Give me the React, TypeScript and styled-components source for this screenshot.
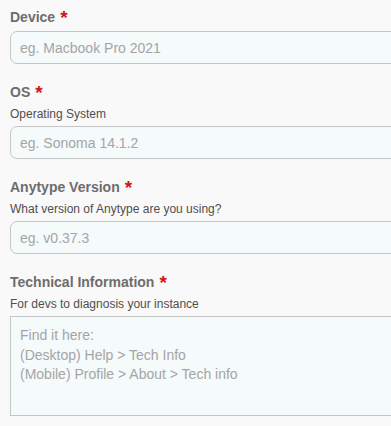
import React from "react";
import styled, { createGlobalStyle } from "styled-components";

const Global = createGlobalStyle`
  html, body {
    margin: 0;
    padding: 0;
    background: #f9f9f9;
    overflow: hidden;
  }
  body {
    font-family: "Liberation Sans", Arial, sans-serif;
  }
`;

const Form = styled.form`
  width: 460px;
  padding: 7px 0 0 10px;
  display: flex;
  flex-direction: column;
  gap: 18px;
`;

const Field = styled.div`
  display: flex;
  flex-direction: column;
  gap: 4px;
`;

const Label = styled.label`
  font-size: 14px;
  line-height: 20px;
  font-weight: bold;
  color: #6d6d6d;
`;

const Required = styled.span`
  color: #cf1717;
  font-size: 19px;
  line-height: 0;
  margin-left: 5px;
  position: relative;
  top: 2px;
`;

const Description = styled.div`
  font-size: 12px;
  line-height: 16px;
  color: #4f4f4f;
`;

const Input = styled.input`
  box-sizing: border-box;
  width: 100%;
  height: 33px;
  padding: 0 9px;
  border: 1px solid #c6c6c6;
  border-radius: 7px;
  background: #f5fafb;
  font-family: "Liberation Sans", Arial, sans-serif;
  font-size: 14px;
  outline: none;
  &::placeholder {
    color: #a5a5a5;
  }
`;

const TextArea = styled.textarea`
  box-sizing: border-box;
  width: 100%;
  height: 100px;
  padding: 9px 9px;
  border: 1px solid #c6c6c6;
  border-radius: 0;
  background: #f5fafb;
  font-family: "Liberation Sans", Arial, sans-serif;
  font-size: 14px;
  line-height: 19.5px;
  resize: none;
  outline: none;
  display: block;
  &::placeholder {
    color: #a5a5a5;
  }
`;

type FieldProps = {
  label: string;
  description?: string;
  children: React.ReactNode;
};

function FormField({ label, description, children }: FieldProps) {
  return (
    <Field>
      <Label>
        {label}
        <Required>*</Required>
      </Label>
      {description && <Description>{description}</Description>}
      {children}
    </Field>
  );
}

export default function App() {
  return (
    <>
      <Global />
      <Form>
        <FormField label="Device">
          <Input placeholder="eg. Macbook Pro 2021" />
        </FormField>
        <FormField label="OS" description="Operating System">
          <Input placeholder="eg. Sonoma 14.1.2" />
        </FormField>
        <FormField
          label="Anytype Version"
          description="What version of Anytype are you using?"
        >
          <Input placeholder="eg. v0.37.3" />
        </FormField>
        <FormField
          label="Technical Information"
          description="For devs to diagnosis your instance"
        >
          <TextArea
            placeholder={
              "Find it here:\n(Desktop) Help > Tech Info\n(Mobile) Profile > About > Tech info"
            }
          />
        </FormField>
      </Form>
    </>
  );
}
